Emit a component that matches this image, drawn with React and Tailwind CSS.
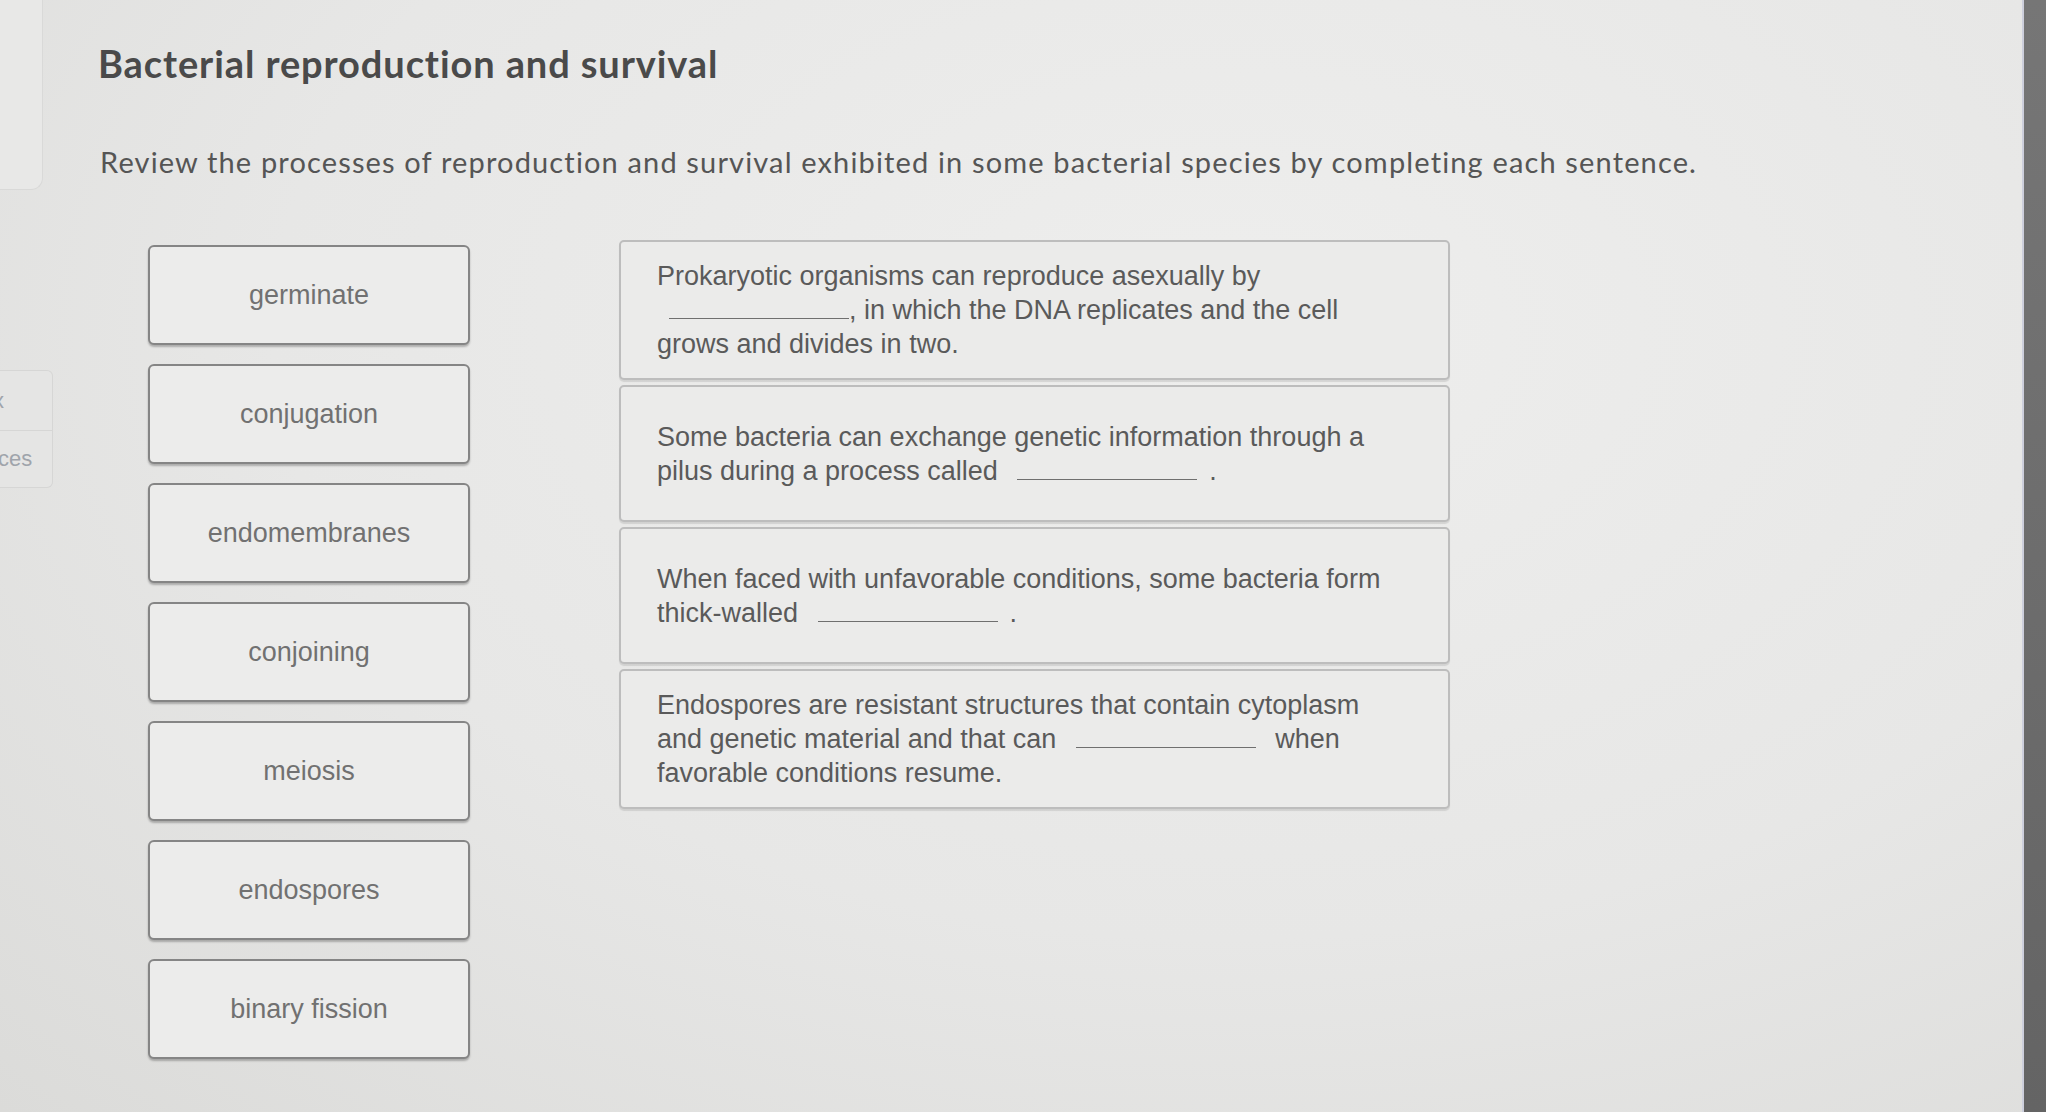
const words = [
  "germinate",
  "conjugation",
  "endomembranes",
  "conjoining",
  "meiosis",
  "endospores",
  "binary fission",
]

function Blank() {
  return (
    <span className="mx-[12px] inline-block h-[18px] w-[180px] border-b-[1.5px] border-[#6f6f6f] align-baseline" />
  )
}

const sentences = [
  [
    <>Prokaryotic organisms can reproduce asexually by</>,
    <>
      <Blank />
      <span className="-ml-[12px]">, in which the DNA replicates and the cell</span>
    </>,
    <>grows and divides in two.</>,
  ],
  [
    <>Some bacteria can exchange genetic information through a</>,
    <>
      pilus during a process called <Blank />.
    </>,
  ],
  [
    <>When faced with unfavorable conditions, some bacteria form</>,
    <>
      thick-walled <Blank />.
    </>,
  ],
  [
    <>Endospores are resistant structures that contain cytoplasm</>,
    <>
      and genetic material and that can <Blank /> when
    </>,
    <>favorable conditions resume.</>,
  ],
]

function WordTile({ label }) {
  return (
    <div className="flex h-[100px] w-[322px] items-center justify-center rounded-[6px] border-2 border-[#858585] bg-[#ececeb] text-[27px] text-[#717171] shadow-[0_2px_2px_rgba(0,0,0,0.25)]">
      {label}
    </div>
  )
}

function SentenceBox({ lines }) {
  return (
    <div className="flex min-h-[137px] w-[831px] items-center rounded-[5px] border-2 border-[#bdbdbd] bg-[#ebebea] px-[36px] py-[17px] shadow-[0_2px_1px_rgba(0,0,0,0.1)]">
      <div className="text-[27px] leading-[34px] text-[#5a5a5a]">
        {lines.map((line, i) => (
          <div key={i} className="whitespace-nowrap">
            {line}
          </div>
        ))}
      </div>
    </div>
  )
}

export default function App() {
  return (
    <div
      className="flex h-[1112px] w-[2046px] overflow-hidden bg-[radial-gradient(ellipse_at_60%_30%,#eeeeed_0%,#e7e7e6_55%,#dbdbd9_100%)]"
      style={{ fontFamily: '"Liberation Sans", Arial, sans-serif' }}
    >
      <aside className="flex w-[55px] shrink-0 flex-col">
        <div className="h-[190px] w-[43px] rounded-br-[12px] border-r border-b border-[#d9d9d8] bg-[#e8e8e7]" />
        <div className="mt-[180px] flex w-[53px] flex-col overflow-hidden rounded-r-[6px] border border-l-0 border-[#d6d6d5] bg-[#e5e5e4] text-[22px] text-[#9fa4ab]">
          <div className="flex h-[60px] items-center border-b border-[#d6d6d5]">
            <span className="-ml-[7px] leading-none">x</span>
          </div>
          <div className="flex h-[56px] items-center">
            <span className="-ml-[2px] leading-none">ces</span>
          </div>
        </div>
      </aside>

      <main className="flex-1 pl-[43px] pt-[40px]">
        <h1
          className="text-[38px] font-bold leading-[46px] tracking-[0.9px] text-[#4a4a4a]"
          style={{ fontFamily: "Lato, sans-serif" }}
        >
          Bacterial reproduction and survival
        </h1>
        <p
          className="mt-[58px] ml-[2px] text-[29px] leading-[36px] tracking-[1.15px] text-[#555555]"
          style={{ fontFamily: "Lato, sans-serif" }}
        >
          Review the processes of reproduction and survival exhibited in some bacterial species by completing each sentence.
        </p>

        <div className="mt-[60px] flex items-start gap-[149px] pl-[50px]">
          <div className="mt-[5px] flex flex-col gap-[19px]">
            {words.map((w) => (
              <WordTile key={w} label={w} />
            ))}
          </div>
          <div className="flex flex-col gap-[5px]">
            {sentences.map((lines, i) => (
              <SentenceBox key={i} lines={lines} />
            ))}
          </div>
        </div>
      </main>

      <div className="w-[24px] shrink-0 border-l-2 border-[#cdcfdc] bg-[linear-gradient(180deg,#767676,#646464)]" />
    </div>
  )
}
